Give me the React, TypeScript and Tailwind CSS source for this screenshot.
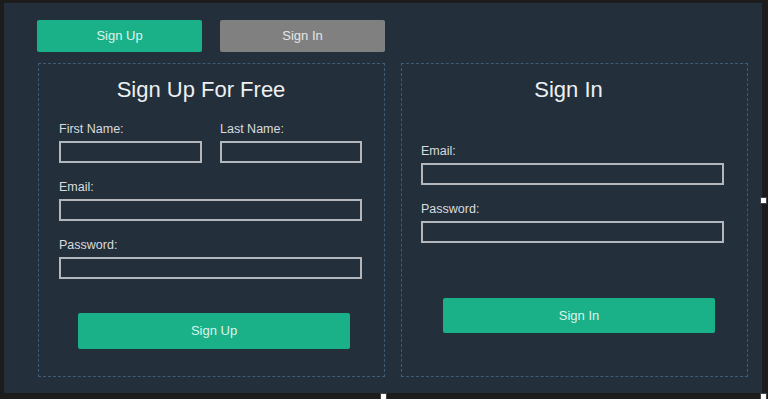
import React from 'react';

const font = { fontFamily: '"Liberation Sans", Arial, sans-serif' };

const Field: React.FC<{ label: string; className?: string }> = ({ label, className = '' }) => (
  <div className={`flex flex-col ${className}`}>
    <label className="h-[15px] text-[12.5px] leading-[15px] text-[#d9dcdf] mb-[4px]">{label}</label>
    <input className="h-[22px] w-full border-2 border-[#b3b7bb] bg-transparent outline-none" />
  </div>
);

const App: React.FC = () => {
  return (
    <div style={font} className="relative w-[768px] h-[399px] bg-[#1c1c1c] pt-[3px] pl-[4px] pr-[6px] pb-[6px] overflow-hidden">
      <div className="h-full bg-[#232f3b] pt-[17px] pl-[33px]">
        {/* tabs */}
        <div className="flex gap-[18px]">
          <button className="w-[165px] h-[32px] bg-[#1ab188] text-[13px] text-[#dff3ec] rounded-[2px]">Sign Up</button>
          <button className="w-[165px] h-[32px] bg-[#808080] text-[13px] text-[#e6e6e6] rounded-[2px]">Sign In</button>
        </div>

        <div className="flex gap-[16px] mt-[11px] ml-[1px]">
          {/* sign up panel */}
          <div className="w-[347px] h-[314px] border border-dashed border-[#3f5b78] pt-[13px] px-[20px]">
            <h1 className="text-center text-[22px] leading-[26px] text-[#eef0f2] pr-[21px]">Sign Up For Free</h1>
            <div className="flex gap-[18px] mt-[19px]">
              <Field label="First Name:" className="w-[143px]" />
              <Field label="Last Name:" className="w-[142px]" />
            </div>
            <Field label="Email:" className="w-[303px] mt-[17px]" />
            <Field label="Password:" className="w-[303px] mt-[17px]" />
            <button className="mt-[34px] ml-[19px] w-[272px] h-[36px] bg-[#1ab188] text-[13px] text-[#dff3ec] rounded-[2px]">Sign Up</button>
          </div>

          {/* sign in panel */}
          <div className="w-[347px] h-[314px] border border-dashed border-[#3f5b78] pt-[13px] px-[19px]">
            <h1 className="text-center text-[22px] leading-[26px] text-[#eef0f2] pr-[12px]">Sign In</h1>
            <Field label="Email:" className="w-[303px] mt-[41px]" />
            <Field label="Password:" className="w-[303px] mt-[17px]" />
            <button className="mt-[55px] ml-[22px] w-[272px] h-[35px] bg-[#1ab188] text-[13px] text-[#dff3ec] rounded-[2px]">Sign In</button>
          </div>
        </div>
      </div>

      {/* selection handles */}
      <div className="absolute left-[380px] top-[393px] w-[7px] h-[7px] bg-white border border-[#444]" />
      <div className="absolute left-[760px] top-[197px] w-[7px] h-[7px] bg-white border border-[#444]" />
      <div className="absolute left-[760px] top-[393px] w-[7px] h-[7px] bg-white border border-[#444]" />
    </div>
  );
};

export default App;
